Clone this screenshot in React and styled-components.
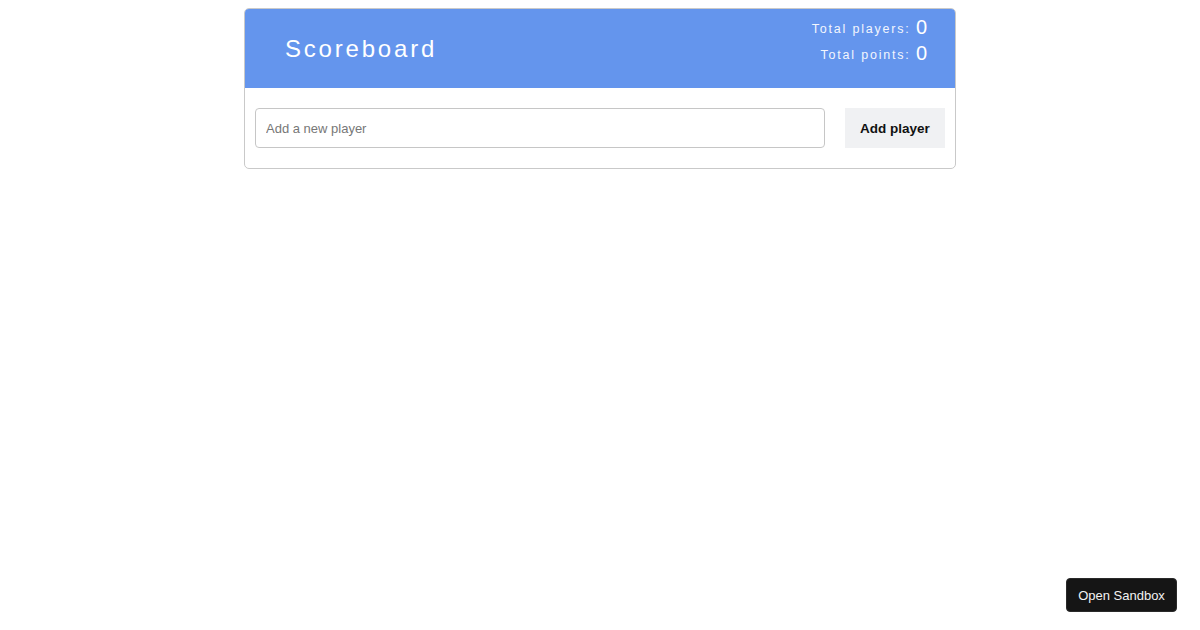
import React, { useState } from "react";
import styled, { createGlobalStyle } from "styled-components";

const Global = createGlobalStyle`
  body {
    margin: 8px;
    font-family: "Liberation Sans", Arial, sans-serif;
    background: #fff;
  }
`;

const Board = styled.div`
  width: 710px;
  margin: 0 auto;
  border: 1px solid #c9c9c9;
  border-radius: 5px;
  overflow: hidden;
`;

const Header = styled.header`
  display: flex;
  align-items: center;
  justify-content: space-between;
  height: 79px;
  padding: 0 28px 0 40px;
  background: #6495ed;
  color: #fff;
`;

const Title = styled.h1`
  margin: 0;
  font-size: 24px;
  font-weight: 400;
  letter-spacing: 2.8px;
`;

const Stats = styled.div`
  display: flex;
  flex-direction: column;
  align-items: flex-end;
  gap: 1px;
  margin-top: -15px;
`;

const Stat = styled.div`
  font-size: 12.5px;
  letter-spacing: 1.8px;
  color: #f3f6fd;
  line-height: 23px;
`;

const Count = styled.span`
  font-size: 20px;
  letter-spacing: 0;
  color: #fff;
  vertical-align: -1px;
`;

const Form = styled.form`
  display: flex;
  gap: 20px;
  padding: 20px 10px 20px;
`;

const Input = styled.input`
  flex: 1;
  height: 40px;
  box-sizing: border-box;
  border: 1px solid #c6c6c6;
  border-radius: 4px;
  padding: 0 10px;
  font-family: "Liberation Sans", Arial, sans-serif;
  font-size: 13px;
  color: #333;
  outline: none;
  &::placeholder {
    color: #777;
  }
`;

const Button = styled.button`
  width: 100px;
  height: 40px;
  border: none;
  border-radius: 0;
  background: #f0f1f3;
  font-family: "Liberation Sans", Arial, sans-serif;
  font-size: 13.5px;
  font-weight: 700;
  color: #111;
  cursor: pointer;
`;

const SandboxLink = styled.a`
  position: fixed;
  right: 23px;
  bottom: 18px;
  display: flex;
  align-items: center;
  justify-content: center;
  width: 111px;
  height: 34px;
  box-sizing: border-box;
  background: #151515;
  border: 1px solid #2a2a2a;
  border-radius: 4px;
  color: #f2f2f2;
  font-size: 13px;
  text-decoration: none;
`;

export default function App() {
  const [players, setPlayers] = useState([]);
  const [name, setName] = useState("");

  const total = players.reduce((sum, p) => sum + p.score, 0);

  const addPlayer = (e) => {
    e.preventDefault();
    if (!name.trim()) return;
    setPlayers([...players, { name: name.trim(), score: 0 }]);
    setName("");
  };

  return (
    <>
      <Global />
      <Board>
        <Header>
          <Title>Scoreboard</Title>
          <Stats>
            <Stat>
              Total players: <Count>{players.length}</Count>
            </Stat>
            <Stat>
              Total points: <Count>{total}</Count>
            </Stat>
          </Stats>
        </Header>
        <Form onSubmit={addPlayer}>
          <Input
            placeholder="Add a new player"
            value={name}
            onChange={(e) => setName(e.target.value)}
          />
          <Button type="submit">Add player</Button>
        </Form>
      </Board>
      <SandboxLink href="#">Open Sandbox</SandboxLink>
    </>
  );
}
